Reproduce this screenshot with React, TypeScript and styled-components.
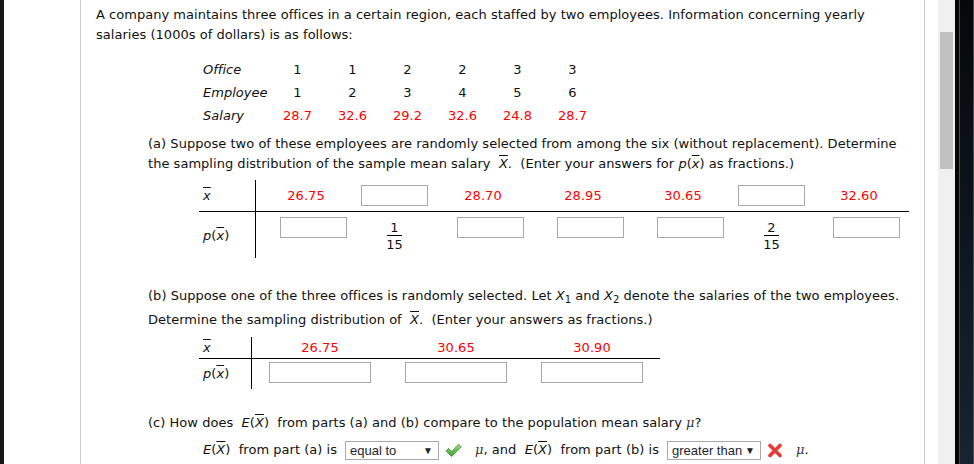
import React from "react";
import styled, { createGlobalStyle } from "styled-components";

const GlobalStyle = createGlobalStyle`
  html, body { margin: 0; padding: 0; background: #fff; }
  body {
    overflow: hidden;
    font-family: "DejaVu Sans", Verdana, sans-serif;
    color: #111;
  }
`;

const Frame = styled.div`
  display: flex;
  width: 974px;
  height: 464px;
  overflow: hidden;
  background: #fff;
`;

const LeftEdge = styled.div`
  flex: none;
  width: 4px;
  background: #161616;
`;

const Gutter = styled.div`
  flex: none;
  width: 76px;
`;

const Page = styled.main`
  flex: none;
  box-sizing: border-box;
  width: 845px;
  border-left: 1px solid #cacaca;
  border-right: 1px solid #cacaca;
  padding: 5px 0 0 15px;
  font-size: 13px;
  letter-spacing: 0.03px;
`;

const RightGap = styled.div`
  flex: none;
  width: 13px;
`;

const Track = styled.div`
  flex: none;
  width: 17px;
  background: #f0f0f0;
  display: flex;
  flex-direction: column;
  align-items: center;
`;

const Thumb = styled.div`
  margin-top: 32px;
  width: 13px;
  height: 137px;
  background: #c1c1c1;
`;

const WindowEdge = styled.div`
  flex: none;
  width: 4px;
  background: #050505;
  border-right: 1px solid #4b4b4b;
`;

const WindowFrame = styled.div`
  flex: none;
  width: 13px;
  background: linear-gradient(#05080b, #152430);
  border-right: 1px solid #4b4b4b;
`;

const Para = styled.p<{ $lh: number; $top?: number; $indent?: number }>`
  margin: ${(p) => p.$top ?? 0}px 0 0 0;
  padding-left: ${(p) => p.$indent ?? 0}px;
  line-height: ${(p) => p.$lh}px;
  white-space: nowrap;
`;

const SalaryGrid = styled.div`
  display: grid;
  grid-template-columns: 67px repeat(6, 55px);
  grid-auto-rows: 23px;
  line-height: 23px;
  margin: 13px 0 0 107px;
`;

const RowLabel = styled.span`
  font-style: italic;
`;

const Num = styled.span<{ $red?: boolean }>`
  text-align: center;
  color: ${(p) => (p.$red ? "#ff0000" : "inherit")};
`;

const Part = styled.section<{ $top: number }>`
  margin: ${(p) => p.$top}px 0 0 52px;
`;

const Dist = styled.div<{ $width: number; $top: number }>`
  margin: ${(p) => p.$top}px 0 0 103px;
  width: ${(p) => p.$width}px;
`;

const DistRow = styled.div<{ $h: number; $head?: boolean }>`
  display: flex;
  height: ${(p) => p.$h}px;
  border-bottom: ${(p) => (p.$head ? "1px solid #000" : "none")};
`;

const LabelCell = styled.div<{ $w: number; $pt?: number; $center?: boolean }>`
  flex: none;
  box-sizing: border-box;
  width: ${(p) => p.$w}px;
  border-right: 1px solid #000;
  padding: ${(p) => p.$pt ?? 0}px 0 0 4px;
  display: flex;
  align-items: ${(p) => (p.$center ? "center" : "flex-start")};
  line-height: 15px;
`;

const Cells = styled.div<{ $cols: string; $pl: number; $pt?: number; $center?: boolean }>`
  flex: none;
  display: grid;
  grid-template-columns: ${(p) => p.$cols};
  padding: ${(p) => p.$pt ?? 0}px 0 0 ${(p) => p.$pl}px;
  justify-items: center;
  align-items: ${(p) => (p.$center ? "center" : "start")};
  line-height: 15px;
`;

const Value = styled.span<{ $shift?: number }>`
  color: #ff0000;
  padding-right: ${(p) => p.$shift ?? 0}px;
`;

const AnswerBox = styled.input<{ $w: number }>`
  display: block;
  box-sizing: border-box;
  width: ${(p) => p.$w}px;
  height: 21px;
  margin: 0;
  padding: 0;
  border: 1px solid #a8a8a8;
  background: #fff;
  outline: none;
`;

const Frac = styled.span`
  display: inline-flex;
  flex-direction: column;
  align-items: center;
  line-height: 14px;
  margin-top: 4px;
`;

const FracNum = styled.span`
  padding: 0 3px;
  border-bottom: 1px solid #000;
`;

const FracDen = styled.span`
  padding: 0 3px;
  margin-top: 2px;
`;

const It = styled.i`
  font-style: italic;
`;

const Bar = styled.i`
  font-style: italic;
  text-decoration: overline;
  text-decoration-thickness: 1px;
`;

const Sub = styled.sub`
  font-size: 10px;
  vertical-align: -3px;
  line-height: 0;
`;

const Mu = styled.i`
  font-family: "DejaVu Serif", "Liberation Serif", serif;
  font-style: italic;
  color: #333;
`;

const Select = styled.span<{ $w: number }>`
  display: inline-flex;
  box-sizing: border-box;
  width: ${(p) => p.$w}px;
  height: 19px;
  margin-left: 8px;
  vertical-align: middle;
  align-items: center;
  justify-content: space-between;
  padding: 0 5px 0 4px;
  border: 1px solid #a9a9a9;
  background: #fff;
  font-family: "Liberation Sans", Arial, sans-serif;
  font-size: 13px;
  letter-spacing: 0;
  line-height: 17px;
  color: #1e1e2e;
`;

const Arrow = styled.span`
  font-size: 10px;
  color: #222;
`;

const Mark = styled.svg`
  display: inline-block;
  vertical-align: middle;
  margin: 0 0 0 6px;
`;

const Gap = styled.span<{ $w: number }>`
  display: inline-block;
  width: ${(p) => p.$w}px;
`;

function XBar() {
  return <Bar>x</Bar>;
}

function PX() {
  return (
    <>
      <It>p</It>(<XBar />)
    </>
  );
}

function EX() {
  return (
    <>
      <It>E</It>(<Bar>X</Bar>)
    </>
  );
}

function Check() {
  return (
    <Mark width="17" height="15" viewBox="0 0 17 15">
      <defs>
        <linearGradient id="ck" x1="0" y1="0" x2="0" y2="1">
          <stop offset="0" stopColor="#9ee07c" />
          <stop offset="1" stopColor="#3e9b30" />
        </linearGradient>
      </defs>
      <polygon
        points="1,8 3.8,5.4 6.6,8.4 13.6,1.2 16.2,3.8 6.6,13.6"
        fill="url(#ck)"
        stroke="#3f8c33"
        strokeWidth="0.8"
        strokeLinejoin="round"
      />
    </Mark>
  );
}

function Cross() {
  return (
    <Mark width="16" height="15" viewBox="0 0 16 15">
      <path d="M3 2.5 L13 12.5 M13 2.5 L3 12.5" stroke="#e53a37" strokeWidth="3.6" strokeLinecap="round" />
    </Mark>
  );
}

const salary = [
  ["1", "1", "2", "2", "3", "3"],
  ["1", "2", "3", "4", "5", "6"],
  ["28.7", "32.6", "29.2", "32.6", "24.8", "28.7"],
];

const colsA = "68px 95px 96px 104px 96px 67px 122px";
const colsB = "136px 136px 136px";

export default function App() {
  return (
    <>
      <GlobalStyle />
      <Frame>
        <LeftEdge />
        <Gutter />
        <Page>
          <Para $lh={20}>
            A company maintains three offices in a certain region, each staffed by two employees. Information concerning yearly
            <br />
            salaries (1000s of dollars) is as follows:
          </Para>

          <SalaryGrid>
            <RowLabel>Office</RowLabel>
            {salary[0].map((v, i) => (
              <Num key={"o" + i}>{v}</Num>
            ))}
            <RowLabel>Employee</RowLabel>
            {salary[1].map((v, i) => (
              <Num key={"e" + i}>{v}</Num>
            ))}
            <RowLabel>Salary</RowLabel>
            {salary[2].map((v, i) => (
              <Num key={"s" + i} $red>
                {v}
              </Num>
            ))}
          </SalaryGrid>

          <Part $top={7}>
            <Para $lh={20}>
              (a) Suppose two of these employees are randomly selected from among the six (without replacement). Determine
              <br />
              the sampling distribution of the sample mean salary&nbsp; <Bar>X</Bar>.&nbsp; (Enter your answers for <PX /> as fractions.)
            </Para>
          </Part>

          <Dist $width={710} $top={6}>
            <DistRow $h={31} $head>
              <LabelCell $w={57} $center>
                <XBar />
              </LabelCell>
              <Cells $cols={colsA} $pl={23} $center>
                <Value $shift={14}>26.75</Value>
                <AnswerBox $w={67} readOnly />
                <Value $shift={14}>28.70</Value>
                <Value $shift={14}>28.95</Value>
                <Value $shift={14}>30.65</Value>
                <AnswerBox $w={67} readOnly />
                <Value $shift={14}>32.60</Value>
              </Cells>
            </DistRow>
            <DistRow $h={46}>
              <LabelCell $w={57} $pt={16}>
                <PX />
              </LabelCell>
              <Cells $cols={colsA} $pl={23} $pt={5}>
                <AnswerBox $w={67} readOnly />
                <Frac>
                  <FracNum>1</FracNum>
                  <FracDen>15</FracDen>
                </Frac>
                <AnswerBox $w={67} readOnly />
                <AnswerBox $w={67} readOnly />
                <AnswerBox $w={67} readOnly />
                <Frac>
                  <FracNum>2</FracNum>
                  <FracDen>15</FracDen>
                </Frac>
                <AnswerBox $w={67} readOnly />
              </Cells>
            </DistRow>
          </Dist>

          <Part $top={26}>
            <Para $lh={24}>
              (b) Suppose one of the three offices is randomly selected. Let <It>X</It>
              <Sub>1</Sub> and <It>X</It>
              <Sub>2</Sub> denote the salaries of the two employees.
              <br />
              Determine the sampling distribution of&nbsp; <Bar>X</Bar>.&nbsp; (Enter your answers as fractions.)
            </Para>
          </Part>

          <Dist $width={461} $top={5}>
            <DistRow $h={21} $head>
              <LabelCell $w={53} $center>
                <XBar />
              </LabelCell>
              <Cells $cols={colsB} $pl={0} $center>
                <Value>26.75</Value>
                <Value>30.65</Value>
                <Value>30.90</Value>
              </Cells>
            </DistRow>
            <DistRow $h={30}>
              <LabelCell $w={53} $pt={7}>
                <PX />
              </LabelCell>
              <Cells $cols={colsB} $pl={0} $pt={3}>
                <AnswerBox $w={102} readOnly />
                <AnswerBox $w={102} readOnly />
                <AnswerBox $w={102} readOnly />
              </Cells>
            </DistRow>
          </Dist>

          <Part $top={20}>
            <Para $lh={27}>
              (c) How does&nbsp; <EX />&nbsp; from parts (a) and (b) compare to the population mean salary <Mu>μ</Mu>?
            </Para>
            <Para $lh={27} $indent={55}>
              <EX />&nbsp; from part (a) is
              <Select $w={94}>
                equal to<Arrow>▼</Arrow>
              </Select>
              <Check />
              <Gap $w={13} />
              <Mu>μ</Mu>, and&nbsp; <EX />&nbsp; from part (b) is
              <Select $w={94}>
                greater than<Arrow>▼</Arrow>
              </Select>
              <Cross />
              <Gap $w={13} />
              <Mu>μ</Mu>.
            </Para>
          </Part>
        </Page>
        <RightGap />
        <Track>
          <Thumb />
        </Track>
        <WindowEdge />
        <WindowFrame />
      </Frame>
    </>
  );
}
